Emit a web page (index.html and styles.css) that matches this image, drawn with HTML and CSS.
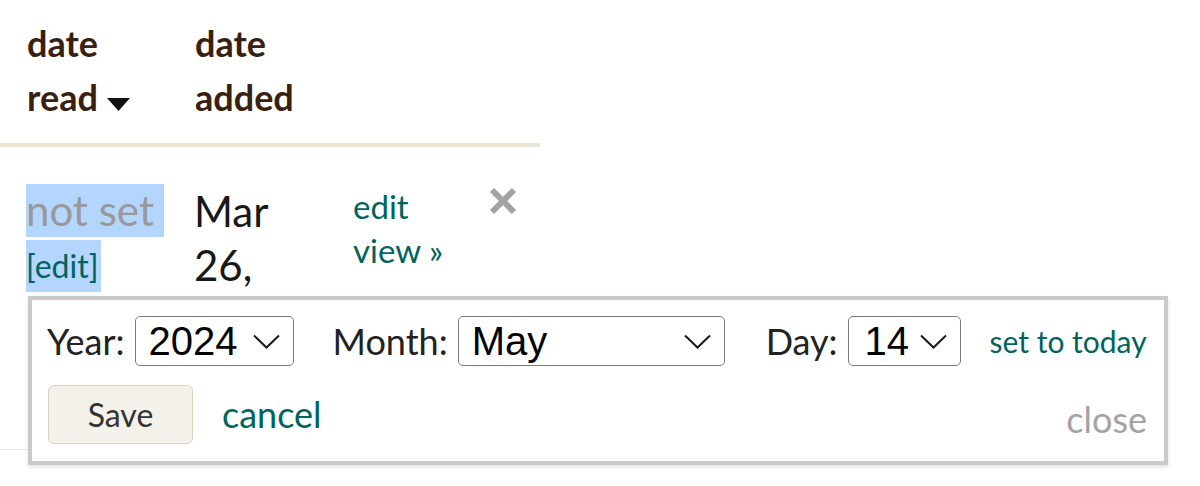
FILE: index.html
```html
<!DOCTYPE html>
<html lang="en">
<head>
    <meta charset="UTF-8">
    <meta name="viewport" content="width=device-width, initial-scale=1.0">
    <title>My Books - date read</title>
    <link rel="stylesheet" href="styles.css">
</head>
<body>
    <div class="shelf">
        <div class="shelf-header">
            <div class="head-cell">date<br>read&nbsp;<svg class="sort-arrow" width="23" height="13" viewBox="0 0 23 13"><polygon points="0,0 23,0 11.5,13" /></svg></div>
            <div class="head-cell">date<br>added</div>
            <div class="head-cell"></div>
            <div class="head-cell"></div>
        </div>

        <div class="shelf-row">
            <div class="col-read">
                <span class="not-set">not set</span>
                <a class="edit-date" href="#">[edit]</a>
            </div>
            <div class="col-added">
                <div class="added-date">Mar 26, 2024</div>
            </div>
            <div class="col-actions">
                <a href="#">edit</a>
                <a href="#">view »</a>
            </div>
            <div class="col-remove">
                <svg class="remove-icon" width="32" height="28" viewBox="0 0 32 28">
                    <path d="M5 3 L27 25 M27 3 L5 25" />
                </svg>
            </div>
        </div>
    </div>

    <!-- date picker popup for the "date read" field -->
    <div class="date-popup">
        <div class="date-fields">
            <label class="field-label">Year:</label>
            <span class="fake-select year-select">
                <span>2024</span>
                <svg class="chevron" width="27" height="15" viewBox="0 0 27 15"><path d="M1 1.5 L13.5 13.5 L26 1.5" /></svg>
            </span>
            <label class="field-label month-label">Month:</label>
            <span class="fake-select month-select">
                <span>May</span>
                <svg class="chevron" width="27" height="15" viewBox="0 0 27 15"><path d="M1 1.5 L13.5 13.5 L26 1.5" /></svg>
            </span>
            <label class="field-label day-label">Day:</label>
            <span class="fake-select day-select">
                <span>14</span>
                <svg class="chevron" width="27" height="15" viewBox="0 0 27 15"><path d="M1 1.5 L13.5 13.5 L26 1.5" /></svg>
            </span>
            <a class="today-link" href="#">set to today</a>
        </div>
        <div class="date-actions">
            <button class="save-button">Save</button>
            <a class="cancel-link" href="#">cancel</a>
            <a class="close-link" href="#">close</a>
        </div>
    </div>
</body>
</html>
```
FILE: styles.css
```css
body {
    margin: 0;
    font-family: Lato, "Helvetica Neue", Arial, sans-serif;
    background-color: #ffffff;
    color: #181818;
}
a {
    color: #00635d;
    text-decoration: none;
}

/* shelf table */
.shelf {
    width: 540px;
}
.shelf-header,
.shelf-row {
    display: grid;
    grid-template-columns: 168px 159px 136px auto;
    padding-left: 27px;
}
.shelf-header {
    padding-top: 16px;
    padding-bottom: 19px;
    border-bottom: 4px solid #ebe6d6;
    font-size: 36px;
    font-weight: bold;
    line-height: 54px;
    color: #382110;
}
.head-cell {
    white-space: nowrap;
}
.sort-arrow {
    fill: #111111;
    vertical-align: 0;
}
.shelf-row {
    box-sizing: border-box;
    height: 303px;
    padding-top: 37px;
    padding-left: 26px;
    border-bottom: 1px solid #e6e6e6;
}
.col-read {
    display: flex;
    flex-direction: column;
    align-items: flex-start;
}
.not-set {
    display: inline-block;
    font-size: 42px;
    line-height: 53px;
    color: #999999;
    background-color: #b4d6fe;
    padding-right: 10px;
}
.edit-date {
    display: inline-block;
    margin-top: 3px;
    font-size: 32px;
    line-height: 52px;
    background-color: #b4d6fe;
    padding-right: 3px;
}
.added-date {
    width: 120px;
    font-size: 42px;
    line-height: 54px;
}
.col-actions {
    display: flex;
    flex-direction: column;
    align-items: flex-start;
    font-size: 33px;
    line-height: 44px;
}
.remove-icon {
    display: block;
    margin-top: 3px;
    margin-left: -2px;
    stroke: #a3a3a3;
    stroke-width: 6;
}

/* popup */
.date-popup {
    position: absolute;
    left: 28px;
    top: 296px;
    width: 1100px;
    height: 145px;
    padding: 16px 17px 0 15px;
    border: 4px solid #cacaca;
    background-color: #ffffff;
    box-shadow: 0 2px 4px rgba(0, 0, 0, 0.12);
    font-size: 36px;
    color: #222222;
}
.date-fields {
    display: flex;
    align-items: center;
    height: 50px;
}
.fake-select {
    display: flex;
    align-items: center;
    justify-content: space-between;
    box-sizing: border-box;
    height: 50px;
    margin-left: 10px;
    padding: 0 13px;
    border: 1px solid #7a7a7a;
    border-radius: 5px;
    font-family: "Liberation Sans", Arial, sans-serif;
    font-size: 40px;
    line-height: 1;
    color: #000000;
}
.year-select {
    width: 159px;
}
.month-select {
    width: 267px;
}
.day-select {
    width: 113px;
    padding-left: 16px;
}
.chevron {
    fill: none;
    stroke: #1a1a1a;
    stroke-width: 2;
}
.month-label {
    margin-left: 39px;
}
.day-label {
    margin-left: 41px;
}
.today-link {
    margin-left: 29px;
    font-size: 30px;
}
.date-actions {
    display: flex;
    align-items: center;
    margin-top: 19px;
}
.save-button {
    width: 145px;
    height: 59px;
    margin-left: 1px;
    border: 1px solid #d9d2c3;
    border-radius: 6px;
    background-color: #f4f1ea;
    font-family: Lato, Arial, sans-serif;
    font-size: 32px;
    color: #333333;
    cursor: pointer;
}
.cancel-link {
    margin-left: 29px;
    margin-top: -2px;
}
.close-link {
    margin-left: auto;
    margin-top: 8px;
    color: #a3a3a3;
}
```
